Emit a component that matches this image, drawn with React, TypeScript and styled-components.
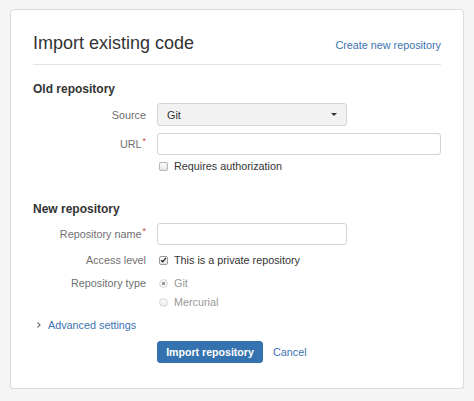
import * as React from 'react';
import styled, { createGlobalStyle } from 'styled-components';

const GlobalStyle = createGlobalStyle`
  html, body {
    margin: 0;
    padding: 0;
    background: #f5f5f5;
  }
  body {
    font-family: 'Liberation Sans', Arial, sans-serif;
    font-size: 10.8px;
    color: #333;
  }
`;

const App: React.FC = () => {
  return (
    <>
      <GlobalStyle />
      <Card>
        <Header>
          <Title>Import existing code</Title>
          <Link href="#">Create new repository</Link>
        </Header>

        <SectionTitle>Old repository</SectionTitle>
        <Row>
          <Label>Source</Label>
          <Select>
            Git
            <Caret />
          </Select>
        </Row>
        <Row gap={7}>
          <Label>
            URL<Required>*</Required>
          </Label>
          <Input wide />
        </Row>
        <Row gap={3}>
          <span />
          <Check>
            <Box />
            Requires authorization
          </Check>
        </Row>

        <SectionTitle top={27}>New repository</SectionTitle>
        <Row>
          <Label>
            Repository name<Required>*</Required>
          </Label>
          <Input />
        </Row>
        <Row gap={7}>
          <Label>Access level</Label>
          <Check>
            <Box checked>
              <svg width="8" height="8" viewBox="0 0 8 8">
                <path d="M1.3 4.2 L3.2 6.1 L6.8 1.6" fill="none" stroke="#222" strokeWidth="1.5" />
              </svg>
            </Box>
            This is a private repository
          </Check>
        </Row>
        <Row gap={7}>
          <Label>Repository type</Label>
          <Check disabled>
            <Radio checked />
            Git
          </Check>
        </Row>
        <Row gap={3}>
          <span />
          <Check disabled>
            <Radio />
            Mercurial
          </Check>
        </Row>

        <Advanced href="#">
          <svg width="6" height="8" viewBox="0 0 6 8">
            <path d="M1.5 1.5 L4 4 L1.5 6.5" fill="none" stroke="#707070" strokeWidth="1.1" />
          </svg>
          <span>Advanced settings</span>
        </Advanced>

        <Actions>
          <span />
          <Buttons>
            <Button>Import repository</Button>
            <Link href="#">Cancel</Link>
          </Buttons>
        </Actions>
      </Card>
    </>
  );
};

export default App;

const Card = styled.div`
  margin: 9px 10px 0 10px;
  background: #fff;
  border: 1px solid #dcdcdc;
  border-radius: 4px;
  box-shadow: 0 1px 1px rgba(0, 0, 0, 0.08);
  padding: 21px 22px 24px 22px;
  height: 333px;
`;

const Header = styled.div`
  display: flex;
  justify-content: space-between;
  align-items: baseline;
  padding-bottom: 9px;
  border-bottom: 1px solid #e3e3e3;
`;

const Title = styled.h1`
  margin: 0;
  font-size: 18px;
  line-height: 24px;
  font-weight: normal;
  color: #333;
`;

const Link = styled.a`
  color: #3b73af;
  text-decoration: none;
  line-height: 16px;
`;

const SectionTitle = styled.h2<{ top?: number }>`
  margin: ${p => p.top ?? 16}px 0 6px;
  font-size: 12px;
  line-height: 16px;
  font-weight: bold;
  color: #333;
`;

const Row = styled.div<{ gap?: number }>`
  display: grid;
  grid-template-columns: 113px 1fr;
  column-gap: 11px;
  align-items: center;
  margin-top: ${p => p.gap ?? 0}px;
`;

const Label = styled.label`
  text-align: right;
  color: #707070;
  line-height: 16px;
`;

const Required = styled.sup`
  color: #d04437;
  font-size: 9px;
  line-height: 0;
  margin-left: 1px;
  vertical-align: 4px;
`;

const Select = styled.div`
  position: relative;
  box-sizing: border-box;
  width: 190px;
  height: 23px;
  padding: 0 9px;
  display: flex;
  align-items: center;
  background: #f2f2f2;
  border: 1px solid #d4d4d4;
  border-radius: 3px;
  color: #333;
`;

const Caret = styled.span`
  position: absolute;
  right: 9px;
  top: 9px;
  width: 0;
  height: 0;
  border-left: 3px solid transparent;
  border-right: 3px solid transparent;
  border-top: 3px solid #333;
`;

const Input = styled.div<{ wide?: boolean }>`
  box-sizing: border-box;
  width: ${p => (p.wide ? '100%' : '190px')};
  height: 22px;
  background: #fff;
  border: 1px solid #d4d4d4;
  border-radius: 3px;
`;

const Check = styled.div<{ disabled?: boolean }>`
  display: flex;
  align-items: center;
  gap: 6px;
  line-height: 16px;
  padding-left: 2px;
  color: ${p => (p.disabled ? '#999' : '#333')};
`;

const Box = styled.span<{ checked?: boolean }>`
  box-sizing: border-box;
  width: 9px;
  height: 9px;
  display: inline-flex;
  align-items: center;
  justify-content: center;
  border: 1px solid ${p => (p.checked ? '#9a9a9a' : '#b5b5b5')};
  border-radius: 2px;
  background: linear-gradient(#fdfdfd, #e6e6e6);
  svg {
    margin-top: -1px;
  }
`;

const Radio = styled.span<{ checked?: boolean }>`
  box-sizing: border-box;
  width: 9px;
  height: 9px;
  border-radius: 50%;
  border: 1px solid #d6d6d6;
  background: ${p =>
    p.checked
      ? 'radial-gradient(circle, #9a9a9a 0 1.6px, #f4f4f4 2px)'
      : 'linear-gradient(#fafafa, #ececec)'};
`;

const Advanced = styled.a`
  display: flex;
  align-items: center;
  gap: 6px;
  margin: 7px 0 0 3px;
  line-height: 16px;
  color: #3b73af;
  text-decoration: none;
`;

const Actions = styled.div`
  display: grid;
  grid-template-columns: 113px 1fr;
  column-gap: 11px;
  margin-top: 8px;
`;

const Buttons = styled.div`
  display: flex;
  align-items: center;
  gap: 10px;
`;

const Button = styled.button`
  height: 22px;
  width: 106px;
  padding: 0;
  border: 1px solid #3572b0;
  border-radius: 3px;
  background: #3572b0;
  color: #fff;
  font-family: 'Liberation Sans', Arial, sans-serif;
  font-size: 10.6px;
  font-weight: bold;
`;
